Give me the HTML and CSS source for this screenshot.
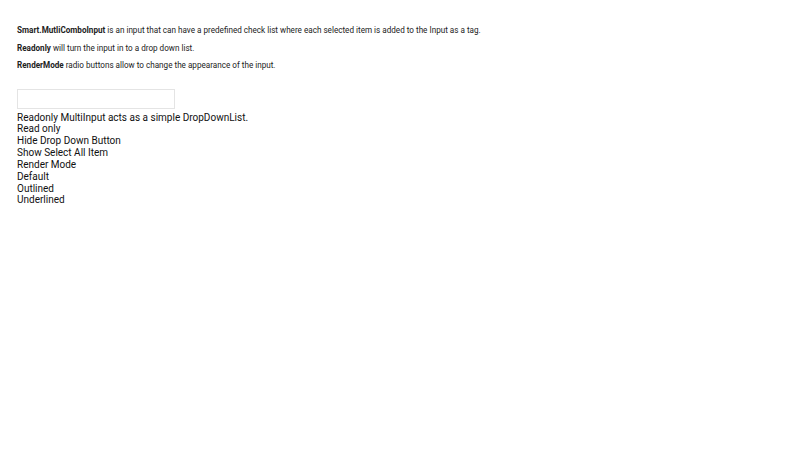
FILE: index.html
```html
<!DOCTYPE html>
<html>
<head>
<meta charset="utf-8">
<link rel="stylesheet" href="styles.css">
</head>
<body>
<div class="page">
  <div class="description">
    <p><b>Smart.MutliComboInput</b> is an input that can have a predefined check list where each selected item is added to the Input as a tag.</p>
    <p><b>Readonly</b> will turn the input in to a drop down list.</p>
    <p><b>RenderMode</b> radio buttons allow to change the appearance of the input.</p>
  </div>
  <div class="demo">
    <div class="input"></div>
    <div>Readonly MultiInput acts as a simple DropDownList.</div>
    <div>Read only</div>
    <div>Hide Drop Down Button</div>
    <div>Show Select All Item</div>
    <div>Render Mode</div>
    <div>Default</div>
    <div>Outlined</div>
    <div>Underlined</div>
  </div>
</div>
</body>
</html>
```
FILE: styles.css
```css
html, body {
  margin: 0;
  padding: 0;
  background: #fff;
}
body {
  font-family: Roboto, "Liberation Sans", sans-serif;
  color: #000;
}
.page {
  padding: 26px 17px;
}
.description {
  font-size: 8.15px;
  color: #222;
}
.description p {
  margin: 0 0 8px 0;
  line-height: 9.5px;
}
.description b {
  font-weight: 700;
}
.demo {
  margin-top: 18.5px;
  font-size: 10px;
  line-height: 11.85px;
  color: #111;
}
.input {
  width: 156px;
  height: 18px;
  border: 1px solid #e4e4e4;
  background: #fff;
  margin-bottom: 2.5px;
}
```
